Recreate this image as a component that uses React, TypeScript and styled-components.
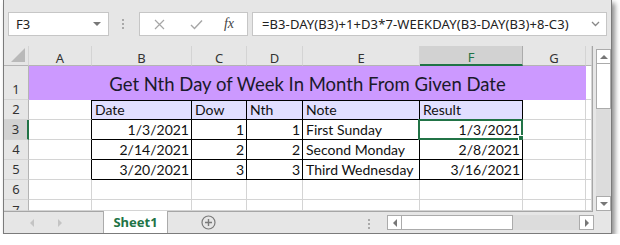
import React from 'react'
import styled, { createGlobalStyle } from 'styled-components'

const Global = createGlobalStyle`
  html, body { margin: 0; padding: 0; background: #ffffff; }
  body { font-family: "Noto Sans", "Open Sans", sans-serif; }
`

const GREEN = '#217346'
const GRID = '#d4d4d4'
const BLACK = '#000000'
const UI = '"Noto Sans", "Open Sans", sans-serif'
const SHEET = 'Lato, "Liberation Sans", sans-serif'

const Window = styled.div`
  box-sizing: border-box;
  width: 609px;
  height: 234px;
  margin-left: 3px;
  background: #e6e6e6;
  border: 1px solid #7b7b7b;
  border-top: none;
  box-shadow: 3px 3px 5px rgba(0, 0, 0, 0.45);
  display: flex;
  flex-direction: column;
  overflow: hidden;
`

const FormulaBar = styled.div`
  height: 46px;
  padding-top: 12px;
  box-sizing: border-box;
  display: flex;
  align-items: flex-start;
  padding-left: 4px;
`

const Box = styled.div<{ $w: number; $ml?: number }>`
  box-sizing: border-box;
  width: ${p => p.$w}px;
  margin-left: ${p => p.$ml ?? 0}px;
  height: 24px;
  background: #ffffff;
  border: 1px solid #c6c6c6;
  display: flex;
  align-items: center;
  font-family: ${UI};
  font-size: 13px;
  color: #222;
`

const NameText = styled.span`
  flex: 1;
  padding-left: 7px;
`

const Caret = styled.span`
  width: 0;
  height: 0;
  border-left: 4px solid transparent;
  border-right: 4px solid transparent;
  border-top: 4px solid #777;
  margin-right: 7px;
`

const Dots = styled.div<{ $h?: number }>`
  width: 2px;
  height: ${p => p.$h ?? 10}px;
  margin: 7px 15px 0 13px;
  background: repeating-linear-gradient(to bottom, #a9a9a9 0 2px, transparent 2px 4px);
`

const IconSlot = styled.span<{ $w: number }>`
  width: ${p => p.$w}px;
  display: flex;
  justify-content: center;
  align-items: center;
`

const Fx = styled.span`
  font-family: "Liberation Serif", serif;
  font-style: italic;
  font-size: 14px;
  color: #444;
`

const FormulaText = styled.span`
  flex: 1;
  padding-left: 9px;
  white-space: nowrap;
  letter-spacing: 0.1px;
`

const Main = styled.div`
  display: flex;
  height: 166px;
`

const Grid = styled.div`
  box-sizing: border-box;
  width: 589px;
  height: 166px;
  display: grid;
  grid-template-columns: 25px 63px 100px 55px 56px 117px 103px 63px 6px;
  grid-template-rows: 20px 34px 20px 20px 20px 20px 20px 11px;
  background: #ffffff;
  border-right: 1px solid #a6a6a6;
  border-bottom: 1px solid #a6a6a6;
  overflow: hidden;
`

const Corner = styled.div`
  background: #e6e6e6;
  border-right: 1px solid ${GRID};
  border-bottom: 1px solid #b4b4b4;
  position: relative;
  &::after {
    content: '';
    position: absolute;
    right: 3px;
    bottom: 3px;
    border-left: 14px solid transparent;
    border-bottom: 14px solid #b9b9b9;
  }
`

const ColHead = styled.div<{ $active?: boolean }>`
  box-sizing: border-box;
  background: ${p => (p.$active ? '#d2d2d2' : '#e6e6e6')};
  border-right: 1px solid ${p => (p.$active ? '#ababab' : GRID)};
  border-bottom: ${p => (p.$active ? `2px solid ${GREEN}` : '1px solid #b4b4b4')};
  color: ${p => (p.$active ? GREEN : '#333')};
  font-family: ${UI};
  font-size: 13px;
  display: flex;
  align-items: center;
  justify-content: center;
  padding-top: 4px;
`

const RowHead = styled.div<{ $active?: boolean; $clip?: boolean }>`
  box-sizing: border-box;
  background: ${p => (p.$active ? '#d2d2d2' : '#e6e6e6')};
  border-right: ${p => (p.$active ? `2px solid ${GREEN}` : '1px solid #b4b4b4')};
  border-bottom: 1px solid ${GRID};
  color: #333;
  font-family: ${UI};
  font-size: 13px;
  line-height: 18px;
  display: flex;
  align-items: ${p => (p.$clip ? 'flex-start' : 'flex-end')};
  justify-content: center;
  padding: ${p => (p.$clip ? '1px 0 0' : '0 0 1px')};
  overflow: hidden;
`

const Cell = styled.div<{
  $align?: 'left' | 'right'
  $bg?: string
  $rb?: string
  $bb?: string
  $bt?: string
}>`
  box-sizing: border-box;
  position: relative;
  background: ${p => p.$bg ?? '#ffffff'};
  border-right: 1px solid ${p => p.$rb ?? GRID};
  border-bottom: 1px solid ${p => p.$bb ?? GRID};
  border-top: ${p => (p.$bt ? `1px solid ${p.$bt}` : 'none')};
  font-family: ${SHEET};
  font-size: 14px;
  color: #111;
  display: flex;
  align-items: flex-end;
  justify-content: ${p => (p.$align === 'right' ? 'flex-end' : 'flex-start')};
  padding: 0 2px 1px 3px;
  white-space: nowrap;
  overflow: visible;
`

const Title = styled.div`
  grid-column: 2 / span 7;
  background: #cc99ff;
  font-family: ${SHEET};
  font-size: 18.5px;
  color: #1a1a2a;
  display: flex;
  align-items: flex-end;
  justify-content: center;
  padding-bottom: 5px;
  box-sizing: border-box;
`

const Selection = styled.div`
  position: absolute;
  left: -2px;
  top: -1px;
  right: -1px;
  bottom: -1px;
  border: 2px solid ${GREEN};
  pointer-events: none;
  &::after {
    content: '';
    position: absolute;
    right: -4px;
    bottom: -4px;
    width: 5px;
    height: 5px;
    background: ${GREEN};
    border: 1px solid #fff;
  }
`

const VScroll = styled.div`
  margin: 3px 0 0 3px;
  width: 15px;
  height: 162px;
  display: flex;
  flex-direction: column;
`

const ScrollBtn = styled.div<{ $w?: number }>`
  box-sizing: border-box;
  width: ${p => p.$w ?? 15}px;
  height: 15px;
  flex-shrink: 0;
  background: #ffffff;
  border: 1px solid #ababab;
  display: flex;
  align-items: center;
  justify-content: center;
`

const Arrow = styled.span<{ $dir: 'up' | 'down' | 'left' | 'right'; $c?: string }>`
  width: 0;
  height: 0;
  ${p => {
    const c = p.$c ?? '#777'
    switch (p.$dir) {
      case 'up':
        return `border-left:4px solid transparent;border-right:4px solid transparent;border-bottom:4px solid ${c};`
      case 'down':
        return `border-left:4px solid transparent;border-right:4px solid transparent;border-top:4px solid ${c};`
      case 'left':
        return `border-top:4px solid transparent;border-bottom:4px solid transparent;border-right:4px solid ${c};`
      default:
        return `border-top:4px solid transparent;border-bottom:4px solid transparent;border-left:4px solid ${c};`
    }
  }}
`

const VThumb = styled.div`
  box-sizing: border-box;
  height: 45px;
  background: #ffffff;
  border: 1px solid #ababab;
  border-top: none;
`

const VTrack = styled.div`
  flex: 1;
  background: #dcdcdc;
`

const TabBar = styled.div`
  height: 21px;
  display: flex;
  align-items: stretch;
`

const NavArrows = styled.div`
  width: 99px;
  display: flex;
  align-items: center;
  padding-left: 26px;
  gap: 24px;
  box-sizing: border-box;
`

const Tab = styled.div`
  box-sizing: border-box;
  width: 65px;
  background: #ffffff;
  border-left: 1px solid #ababab;
  border-right: 1px solid #ababab;
  margin-top: -1px;
  color: ${GREEN};
  font-family: ${UI};
  font-weight: bold;
  font-size: 13px;
  display: flex;
  align-items: center;
  justify-content: center;
`

const AddBtn = styled.div`
  margin-left: 33px;
  display: flex;
  align-items: center;
`

const Spacer = styled.div`
  flex: 1;
`

const HScroll = styled.div`
  width: 207px;
  margin-left: 2px;
  margin-right: 17px;
  display: flex;
  align-items: center;
`

const HThumb = styled.div`
  box-sizing: border-box;
  width: 111px;
  height: 15px;
  background: #ffffff;
  border: 1px solid #ababab;
  border-left: none;
`

const HTrack = styled.div`
  flex: 1;
  height: 15px;
  background: #dcdcdc;
`

const cols = ['A', 'B', 'C', 'D', 'E', 'F', 'G', '']

type Row = { date: string; dow: string; nth: string; note: string; result: string }

const rows: Row[] = [
  { date: '1/3/2021', dow: '1', nth: '1', note: 'First Sunday', result: '1/3/2021' },
  { date: '2/14/2021', dow: '2', nth: '2', note: 'Second Monday', result: '2/8/2021' },
  { date: '3/20/2021', dow: '3', nth: '3', note: 'Third Wednesday', result: '3/16/2021' },
]

const HEAD_BG = '#e1dfff'

export default function App() {
  return (
    <>
      <Global />
      <Window>
        <FormulaBar>
          <Box $w={101}>
            <NameText>F3</NameText>
            <Caret />
          </Box>
          <Dots />
          <Box $w={109}>
            <IconSlot $w={38}>
              <svg width="11" height="11" viewBox="0 0 11 11">
                <path d="M1 1L10 10M10 1L1 10" stroke="#a6a6a6" strokeWidth="1.2" />
              </svg>
            </IconSlot>
            <IconSlot $w={36}>
              <svg width="13" height="11" viewBox="0 0 13 11">
                <path d="M1 6L4.5 9.5L12 1.5" stroke="#a6a6a6" strokeWidth="1.4" fill="none" />
              </svg>
            </IconSlot>
            <IconSlot $w={30}>
              <Fx>fx</Fx>
            </IconSlot>
          </Box>
          <Box $w={355} $ml={4}>
            <FormulaText>=B3-DAY(B3)+1+D3*7-WEEKDAY(B3-DAY(B3)+8-C3)</FormulaText>
            <svg width="9" height="6" viewBox="0 0 9 6" style={{ marginRight: 6 }}>
              <path d="M1 1L4.5 4.5L8 1" stroke="#888" strokeWidth="1.3" fill="none" />
            </svg>
          </Box>
        </FormulaBar>

        <Main>
          <Grid>
            <Corner />
            {cols.map((c, i) => (
              <ColHead key={i} $active={c === 'F'}>
                {c}
              </ColHead>
            ))}

            <RowHead>1</RowHead>
            <Title>Get Nth Day of Week In Month From Given Date</Title>
            <Cell />

            <RowHead>2</RowHead>
            <Cell $rb={BLACK} />
            {['Date', 'Dow', 'Nth', 'Note', 'Result'].map(h => (
              <Cell key={h} $bg={HEAD_BG} $rb={BLACK} $bb={BLACK} $bt={BLACK}>
                {h}
              </Cell>
            ))}
            <Cell />
            <Cell />

            {rows.map((r, i) => (
              <React.Fragment key={r.date}>
                <RowHead $active={i === 0}>{i + 3}</RowHead>
                <Cell $rb={BLACK} />
                <Cell $align="right" $rb={BLACK} $bb={BLACK}>
                  {r.date}
                </Cell>
                <Cell $align="right" $rb={BLACK} $bb={BLACK}>
                  {r.dow}
                </Cell>
                <Cell $align="right" $rb={BLACK} $bb={BLACK}>
                  {r.nth}
                </Cell>
                <Cell $rb={BLACK} $bb={BLACK}>
                  {r.note}
                </Cell>
                <Cell $align="right" $rb={BLACK} $bb={BLACK}>
                  {r.result}
                  {i === 0 && <Selection />}
                </Cell>
                <Cell />
                <Cell />
              </React.Fragment>
            ))}

            {[6, 7].map(n => (
              <React.Fragment key={n}>
                <RowHead $clip={n === 7}>{n}</RowHead>
                {cols.map((_, i) => (
                  <Cell key={i} />
                ))}
              </React.Fragment>
            ))}
          </Grid>

          <VScroll>
            <ScrollBtn>
              <Arrow $dir="up" />
            </ScrollBtn>
            <VThumb />
            <VTrack />
            <ScrollBtn>
              <Arrow $dir="down" />
            </ScrollBtn>
          </VScroll>
        </Main>

        <TabBar>
          <NavArrows>
            <Arrow $dir="left" $c="#c4c4c4" />
            <Arrow $dir="right" $c="#c4c4c4" />
          </NavArrows>
          <Tab>Sheet1</Tab>
          <AddBtn>
            <svg width="15" height="15" viewBox="0 0 15 15">
              <circle cx="7.5" cy="7.5" r="6.5" stroke="#7a7a7a" strokeWidth="1.2" fill="none" />
              <path d="M7.5 4V11M4 7.5H11" stroke="#7a7a7a" strokeWidth="1.4" />
            </svg>
          </AddBtn>
          <Spacer />
          <Dots $h={10} />
          <HScroll>
            <ScrollBtn>
              <Arrow $dir="left" />
            </ScrollBtn>
            <HThumb />
            <HTrack />
            <ScrollBtn>
              <Arrow $dir="right" />
            </ScrollBtn>
          </HScroll>
        </TabBar>
      </Window>
    </>
  )
}
